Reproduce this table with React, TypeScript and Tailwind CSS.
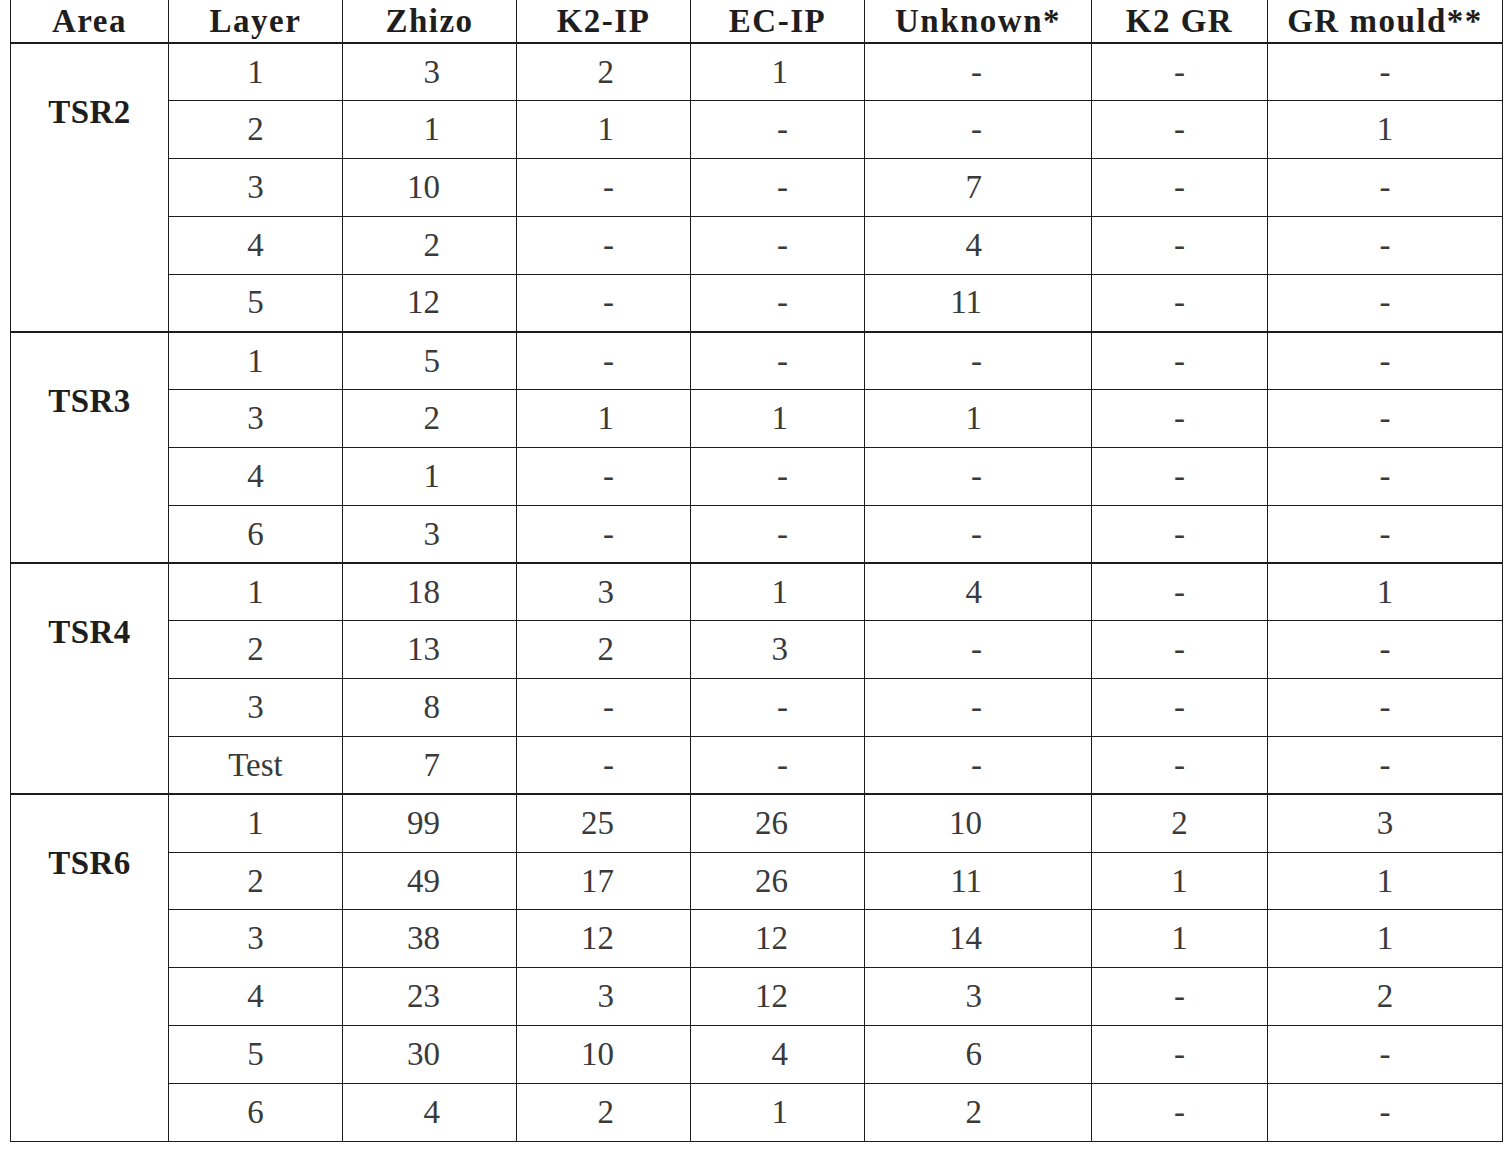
const groups = [
  {
    area: "TSR2",
    rows: [
      ["1", "3", "2", "1", "-", "-", "-"],
      ["2", "1", "1", "-", "-", "-", "1"],
      ["3", "10", "-", "-", "7", "-", "-"],
      ["4", "2", "-", "-", "4", "-", "-"],
      ["5", "12", "-", "-", "11", "-", "-"],
    ],
  },
  {
    area: "TSR3",
    rows: [
      ["1", "5", "-", "-", "-", "-", "-"],
      ["3", "2", "1", "1", "1", "-", "-"],
      ["4", "1", "-", "-", "-", "-", "-"],
      ["6", "3", "-", "-", "-", "-", "-"],
    ],
  },
  {
    area: "TSR4",
    rows: [
      ["1", "18", "3", "1", "4", "-", "1"],
      ["2", "13", "2", "3", "-", "-", "-"],
      ["3", "8", "-", "-", "-", "-", "-"],
      ["Test", "7", "-", "-", "-", "-", "-"],
    ],
  },
  {
    area: "TSR6",
    rows: [
      ["1", "99", "25", "26", "10", "2", "3"],
      ["2", "49", "17", "26", "11", "1", "1"],
      ["3", "38", "12", "12", "14", "1", "1"],
      ["4", "23", "3", "12", "3", "-", "2"],
      ["5", "30", "10", "4", "6", "-", "-"],
      ["6", "4", "2", "1", "2", "-", "-"],
    ],
  },
]

const headers = ["Area", "Layer", "Zhizo", "K2-IP", "EC-IP", "Unknown*", "K2 GR", "GR mould**"]

// numbers in the middle columns line up on their right edge
const align = [
  "text-center",
  "text-right pr-[76px]",
  "text-right pr-[76px]",
  "text-right pr-[76px]",
  "text-right pr-[109px]",
  "text-center",
  "text-center",
]

export default function App() {
  return (
    <div className="min-h-screen bg-white pl-[10px] font-['Liberation_Serif',serif]">
      <table className="w-[1492px] table-fixed border-collapse text-[33px] text-[#3a3a3a]">
        <colgroup>
          <col className="w-[158px]" />
          <col className="w-[174px]" />
          <col className="w-[174px]" />
          <col className="w-[174px]" />
          <col className="w-[174px]" />
          <col className="w-[227px]" />
          <col className="w-[176px]" />
          <col className="w-[235px]" />
        </colgroup>
        <thead>
          <tr className="h-[43px]">
            {headers.map((h) => (
              <th
                key={h}
                className="border border-t-0 border-[#1c1c1c] text-center align-middle font-bold tracking-[1.5px] text-[#1e1e1e] leading-none"
              >
                {h}
              </th>
            ))}
          </tr>
        </thead>
        <tbody>
          {groups.map((g) =>
            g.rows.map((row, i) => (
              <tr key={g.area + i} className="h-[57.8px]">
                {i === 0 && (
                  <td
                    rowSpan={g.rows.length}
                    className="border border-t-2 border-[#1c1c1c] pt-[52px] text-center align-top font-bold leading-[33px] tracking-[0.5px] text-[#1e1e1e]"
                  >
                    {g.area}
                  </td>
                )}
                {row.map((v, j) => (
                  <td
                    key={j}
                    className={`border border-[#1c1c1c] align-middle leading-none ${i === 0 ? "border-t-2" : ""} ${align[j]}`}
                  >
                    {v}
                  </td>
                ))}
              </tr>
            ))
          )}
        </tbody>
      </table>
    </div>
  )
}
